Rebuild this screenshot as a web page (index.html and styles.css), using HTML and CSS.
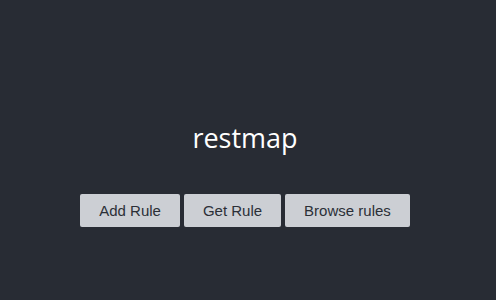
FILE: index.html
```html
<!DOCTYPE html>
<html>
<head>
<meta charset="utf-8">
<link rel="stylesheet" href="styles.css">
</head>
<body>
<div class="app">
  <h1 class="title">restmap</h1>
  <div class="actions">
    <button class="btn">Add Rule</button>
    <button class="btn">Get Rule</button>
    <button class="btn">Browse rules</button>
  </div>
</div>
</body>
</html>
```
FILE: styles.css
```css
html, body {
  margin: 0;
  padding: 0;
  background: #282c34;
}
.app {
  height: 300px;
  display: flex;
  flex-direction: column;
  align-items: center;
  padding-top: 118px;
  box-sizing: border-box;
}
.title {
  margin: 0;
  font-family: "Open Sans", "Noto Sans", sans-serif;
  font-weight: 400;
  font-size: 27px;
  line-height: 40px;
  color: #ffffff;
  transform: translateX(-3px);
}
.actions {
  display: flex;
  gap: 4px;
  margin-top: 36px;
  transform: translateX(-3px);
}
.btn {
  height: 33px;
  padding: 0 19px;
  border: none;
  border-radius: 2px;
  background: #cccfd4;
  color: #2b2f37;
  font-family: "Liberation Sans", Arial, sans-serif;
  font-size: 15px;
}
```
